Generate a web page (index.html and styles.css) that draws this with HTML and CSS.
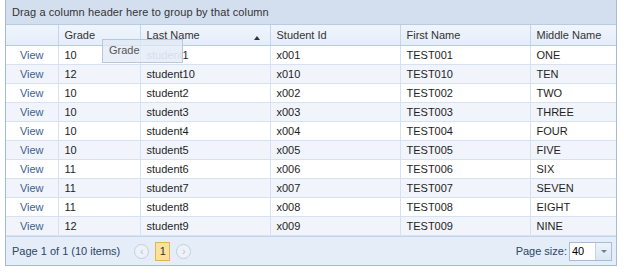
FILE: index.html
```html
<!DOCTYPE html>
<html lang="en">
<head>
  <meta charset="UTF-8">
  <title>Students Grid</title>
  <link rel="stylesheet" href="styles.css">
</head>
<body>

<div class="grid">
  <div class="group-panel">Drag a column header here to group by that column</div>

  <table class="grid-table">
    <colgroup>
      <col class="c-view">
      <col class="c-grade">
      <col class="c-last">
      <col class="c-id">
      <col class="c-first">
      <col class="c-middle">
    </colgroup>
    <thead>
      <tr>
        <th></th>
        <th>Grade</th>
        <th class="sorted">Last Name <span class="sort-arrow"></span></th>
        <th>Student Id</th>
        <th>First Name</th>
        <th>Middle Name</th>
      </tr>
    </thead>
    <tbody>
      <tr><td class="view">View</td><td>10</td><td><span class="faded">student</span>1</td><td>x001</td><td>TEST001</td><td>ONE</td></tr>
      <tr class="alt"><td class="view">View</td><td>12</td><td>student10</td><td>x010</td><td>TEST010</td><td>TEN</td></tr>
      <tr><td class="view">View</td><td>10</td><td>student2</td><td>x002</td><td>TEST002</td><td>TWO</td></tr>
      <tr class="alt"><td class="view">View</td><td>10</td><td>student3</td><td>x003</td><td>TEST003</td><td>THREE</td></tr>
      <tr><td class="view">View</td><td>10</td><td>student4</td><td>x004</td><td>TEST004</td><td>FOUR</td></tr>
      <tr class="alt"><td class="view">View</td><td>10</td><td>student5</td><td>x005</td><td>TEST005</td><td>FIVE</td></tr>
      <tr><td class="view">View</td><td>11</td><td>student6</td><td>x006</td><td>TEST006</td><td>SIX</td></tr>
      <tr class="alt"><td class="view">View</td><td>11</td><td>student7</td><td>x007</td><td>TEST007</td><td>SEVEN</td></tr>
      <tr><td class="view">View</td><td>11</td><td>student8</td><td>x008</td><td>TEST008</td><td>EIGHT</td></tr>
      <tr class="alt"><td class="view">View</td><td>12</td><td>student9</td><td>x009</td><td>TEST009</td><td>NINE</td></tr>
    </tbody>
  </table>

  <div class="pager">
    <span class="pager-info">Page 1 of 1 (10 items)</span>
    <span class="pager-btn">&lsaquo;</span>
    <span class="pager-num">1</span>
    <span class="pager-btn">&rsaquo;</span>
    <span class="pager-size">
      Page size:
      <span class="size-box">
        <span class="size-value">40</span>
        <span class="size-drop"><span class="drop-arrow"></span></span>
      </span>
    </span>
  </div>

  <div class="drag-cue">Grade</div>
</div>

</body>
</html>
```

FILE: styles.css
```css
body {
  margin: 0;
  background: #fff;
  font-family: Tahoma, 'Liberation Sans', Arial, sans-serif;
  font-size: 11px;
  color: #1e1e1e;
}

.grid {
  position: relative;
  width: 610px;
  margin-left: 5px;
  border: 1px solid #a3bad9;
  border-top: none;
}

.group-panel {
  height: 24px;
  line-height: 24px;
  padding-left: 6px;
  letter-spacing: 0.1px;
  background: #d3dfef;
  color: #333;
  border-bottom: 1px solid #b8cbe4;
}

.grid-table {
  width: 100%;
  border-collapse: collapse;
  table-layout: fixed;
}

.c-view { width: 52px; }
.c-grade { width: 82px; }
.c-last { width: 130px; }
.c-id { width: 130px; }
.c-first { width: 130px; }

.grid-table th {
  height: 20px;
  padding: 0 6px;
  text-align: left;
  font-weight: normal;
  color: #333;
  background: linear-gradient(#f0f5fc, #e4edf8);
  border-left: 1px solid #c4d5ec;
  border-bottom: 1px solid #b8cbe4;
}

.grid-table th:first-child {
  border-left: none;
}

.sort-arrow {
  float: right;
  margin: 7px 4px 0 0;
  width: 0;
  height: 0;
  border-left: 3px solid transparent;
  border-right: 3px solid transparent;
  border-bottom: 4px solid #333;
}

.grid-table td {
  height: 18px;
  padding: 0 6px;
  white-space: nowrap;
  border-left: 1px solid #d6e2f1;
  border-bottom: 1px solid #d6e2f1;
}

.grid-table td:first-child {
  border-left: none;
}

.grid-table tr.alt td {
  background: #f1f5fb;
}

.grid-table td.view {
  text-align: center;
  color: #3d5f8f;
}

.faded {
  color: #b0bccc;
}

.pager {
  display: flex;
  align-items: center;
  height: 28px;
  padding: 0 4px 0 6px;
  background: #e4edf8;
  color: #2d4566;
  border-top: 1px solid #c4d5ec;
}

.pager-info {
  margin-right: 14px;
}

.pager-btn {
  display: inline-flex;
  align-items: center;
  justify-content: center;
  width: 13px;
  height: 13px;
  border: 1px solid #c2cfe0;
  border-radius: 50%;
  color: #b5c2d3;
  font-size: 11px;
  line-height: 1;
  background: #edf2f9;
}

.pager-num {
  display: inline-block;
  width: 13px;
  height: 17px;
  line-height: 17px;
  margin: 0 6px;
  text-align: center;
  color: #333;
  background: #fbe19c;
  border: 1px solid #e3b457;
}

.pager-size {
  margin-left: auto;
  display: flex;
  align-items: center;
  gap: 2px;
}

.size-box {
  display: flex;
  width: 41px;
  height: 17px;
  border: 1px solid #a9bcd6;
  background: #fff;
}

.size-value {
  flex: 1;
  padding-left: 2px;
  line-height: 17px;
  color: #000;
}

.size-drop {
  width: 15px;
  display: flex;
  align-items: center;
  justify-content: center;
  background: linear-gradient(#edf3fb, #dbe6f4);
  border-left: 1px solid #c4d3e6;
}

.drop-arrow {
  width: 0;
  height: 0;
  border-left: 3px solid transparent;
  border-right: 3px solid transparent;
  border-top: 3px solid #6b7f99;
}

.drag-cue {
  position: absolute;
  left: 96px;
  top: 39px;
  width: 81px;
  height: 24px;
  padding: 4px 0 0 6px;
  box-sizing: border-box;
  color: #555;
  background: rgba(225, 234, 246, 0.75);
  border: 1px solid #b8c8de;
}
```
